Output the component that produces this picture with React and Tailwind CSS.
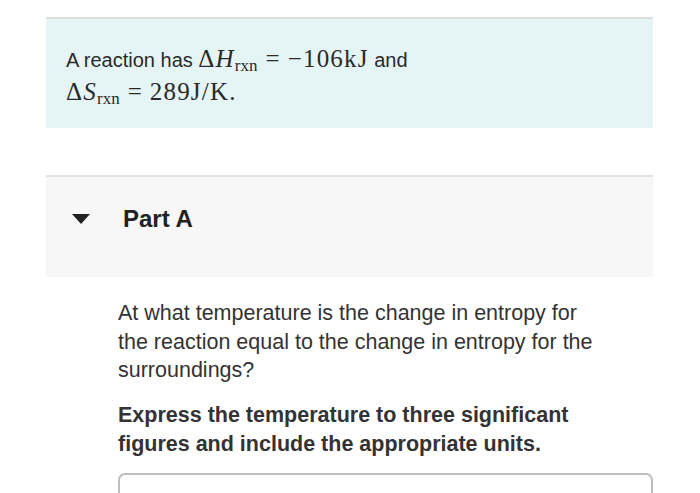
import React from "react";

const Sub = ({ children }) => (
  <span className="relative top-[4px] text-[17px] not-italic tracking-normal">{children}</span>
);

export default function App() {
  return (
    <div className="w-[700px] h-[493px] bg-white overflow-hidden font-['Liberation_Sans',Arial,sans-serif] text-[#2a2a2a]">
      <div className="pt-[17px] pl-[46px] w-[653px]">
        <div className="border-t-2 border-[#dedede] bg-[#e5f5f5] h-[111px] pl-[20px] pt-[25px]">
          <div className="text-[20px] leading-[30px]">
            A reaction has{" "}
            <span className="font-['Liberation_Serif',serif] text-[25px] tracking-[1.2px]">
              Δ<span className="italic">H</span>
              <Sub>rxn</Sub>
              <span className="mx-[8px] tracking-normal">=</span>−106kJ
            </span>{" "}
            and
            <br />
            <span className="font-['Liberation_Serif',serif] text-[25px] tracking-[1.2px]">
              Δ<span className="italic">S</span>
              <Sub>rxn</Sub>
              <span className="mx-[8px] tracking-normal">=</span>289J/K.
            </span>
          </div>
        </div>

        <div className="mt-[47px] border-t-2 border-[#e2e2e2] bg-[#f7f7f7] h-[102px] flex items-center pl-[26px] pb-[16px]">
          <svg width="18" height="10" viewBox="0 0 18 10" className="mr-[33px]">
            <path d="M0 0 H18 L9 10 Z" fill="#222" />
          </svg>
          <span className="font-bold text-[24px] text-[#222]">Part A</span>
        </div>

        <div className="pl-[72px] pt-[22px]">
          <p className="w-[485px] text-[21.5px] leading-[28.5px] text-[#333]">
            At what temperature is the change in entropy for the reaction equal to the change in entropy for the surroundings?
          </p>
          <p className="w-[485px] mt-[16px] text-[21.5px] leading-[29px] font-bold text-[#333]">
            Express the temperature to three significant figures and include the appropriate units.
          </p>
          <div className="mt-[14px] h-[40px] border-2 border-[#bdbdbd] rounded-[7px]" />
        </div>
      </div>
    </div>
  );
}
